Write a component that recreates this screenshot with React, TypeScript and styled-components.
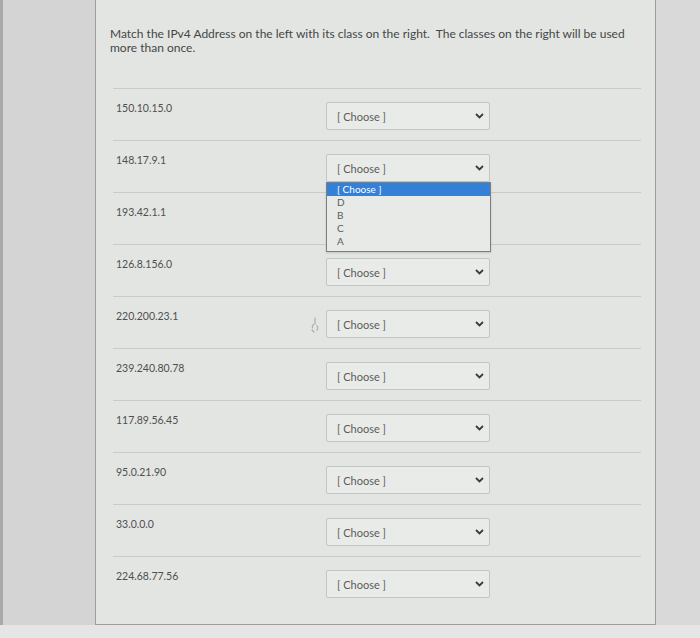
import React from 'react';
import styled, { createGlobalStyle } from 'styled-components';

const GlobalStyle = createGlobalStyle`
  html, body {
    margin: 0;
    padding: 0;
  }
  body {
    background: #d9dad9;
    font-family: Lato, 'Open Sans', sans-serif;
    color: #4b4d4b;
  }
`;

const Screen = styled.div`
  width: 700px;
  height: 638px;
  overflow: hidden;
  display: flex;
  flex-direction: column;
`;

const Main = styled.div`
  display: flex;
  height: 625px;
`;

const LeftGutter = styled.div`
  width: 95px;
  flex: none;
  background: #d3d4d3;
  border-left: 3px solid #a8a9a8;
  box-sizing: border-box;
`;

const RightGutter = styled.div`
  flex: 1;
  background: #d8d9d8;
`;

const BottomStrip = styled.div`
  flex: 1;
  background: #e4e5e4;
`;

const Card = styled.div`
  width: 561px;
  flex: none;
  box-sizing: border-box;
  background: #e3e5e3;
  border: 1px solid #9c9e9c;
  border-top: none;
  padding: 27px 14px 0 14px;
`;

const Prompt = styled.p`
  margin: 0 0 34px;
  font-size: 12px;
  line-height: 13.5px;
  color: #454745;
`;

const Rows = styled.div`
  margin-left: 3px;
`;

const Row = styled.div<{ $last?: boolean }>`
  display: flex;
  align-items: flex-start;
  height: ${(p) => (p.$last ? '68px' : '52px')};
  box-sizing: border-box;
  border-top: 1px solid #c9cbc9;
`;

const Address = styled.div`
  width: 213px;
  flex: none;
  padding: 11px 0 0 3px;
  box-sizing: border-box;
  font-size: 10.5px;
  line-height: 16px;
  color: #4e504e;
`;

const SelectBox = styled.div`
  position: relative;
  margin-top: 13px;
  width: 164px;
  height: 28px;
  box-sizing: border-box;
  display: flex;
  align-items: center;
  justify-content: space-between;
  padding: 0 5px 0 10px;
  background: #e9ebe9;
  border: 1px solid #c4c6c4;
  border-radius: 2px;
  font-size: 11px;
  color: #5a5c5a;
`;

const Chevron = () => (
  <svg width="9" height="6" viewBox="0 0 9 6">
    <path d="M1 1 L4.5 4.5 L8 1" fill="none" stroke="#3a3c3a" strokeWidth="1.8" />
  </svg>
);

const CursorMark = styled.svg`
  position: absolute;
  left: -18px;
  top: 6px;
  opacity: 0.45;
`;

const OptionList = styled.ul`
  position: absolute;
  top: calc(100% + 1px);
  left: -1px;
  width: 165px;
  margin: 0;
  padding: 0 0 3px;
  list-style: none;
  box-sizing: border-box;
  background: #e8eae8;
  border: 1px solid #7d7f7d;
  box-shadow: 0 1px 2px rgba(0, 0, 0, 0.15);
  z-index: 2;
`;

const OptionItem = styled.li<{ $active?: boolean }>`
  height: 13px;
  line-height: 13px;
  padding-left: 10px;
  font-size: 10px;
  color: ${(p) => (p.$active ? '#ffffff' : '#5a5c5a')};
  background: ${(p) => (p.$active ? '#3480d6' : 'transparent')};
`;

const addresses = [
  '150.10.15.0',
  '148.17.9.1',
  '193.42.1.1',
  '126.8.156.0',
  '220.200.23.1',
  '239.240.80.78',
  '117.89.56.45',
  '95.0.21.90',
  '33.0.0.0',
  '224.68.77.56',
];

const options = ['[ Choose ]', 'D', 'B', 'C', 'A'];

const App: React.FC = () => {
  const openIndex = 1;
  const cursorIndex = 4;
  return (
    <>
      <GlobalStyle />
      <Screen>
        <Main>
          <LeftGutter />
          <Card>
            <Prompt>
              Match the IPv4 Address on the left with its class on the right.&nbsp; The classes on
              the right will be used more than once.
            </Prompt>
            <Rows>
              {addresses.map((addr, i) => (
                <Row key={addr} $last={i === addresses.length - 1}>
                  <Address>{addr}</Address>
                  <SelectBox>
                    <span>[ Choose ]</span>
                    <Chevron />
                    {i === cursorIndex && (
                      <CursorMark width="12" height="16" viewBox="0 0 12 16">
                        <path
                          d="M6 1 L6 7 M6 7 C4 7 3 9 3.5 11 M8 9 C9 10 9 12 8 13 M3 13 L5 15"
                          fill="none"
                          stroke="#6a6c6a"
                          strokeWidth="1.2"
                          strokeLinecap="round"
                        />
                      </CursorMark>
                    )}
                    {i === openIndex && (
                      <OptionList>
                        {options.map((opt, j) => (
                          <OptionItem key={opt} $active={j === 0}>
                            {opt}
                          </OptionItem>
                        ))}
                      </OptionList>
                    )}
                  </SelectBox>
                </Row>
              ))}
            </Rows>
          </Card>
          <RightGutter />
        </Main>
        <BottomStrip />
      </Screen>
    </>
  );
};

export default App;
